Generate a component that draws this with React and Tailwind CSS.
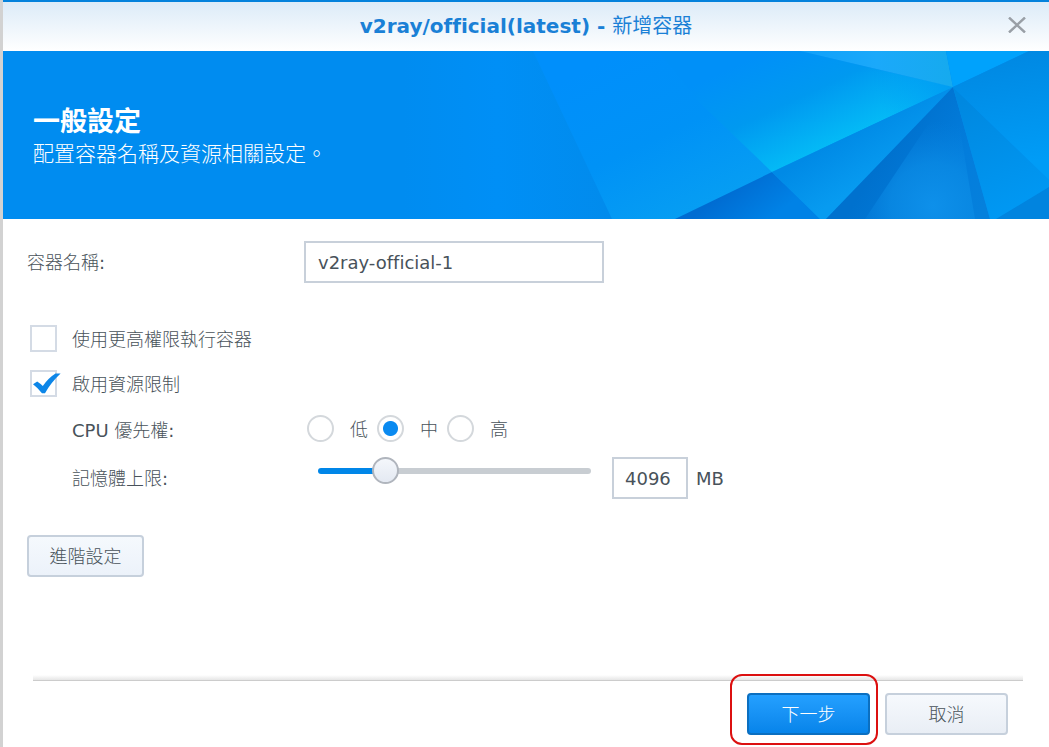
import { useState } from "react";

const MEMORY_MIN = 64;
const MEMORY_MAX = 18432;
const THUMB = 27;

function Han({ children }) {
  return <span className="font-['Noto_Sans_CJK_TC',sans-serif] font-light">{children}</span>;
}

function BannerArt() {
  return (
    <svg
      className="absolute inset-y-0 right-0 h-full"
      viewBox="400 0 646 168"
      preserveAspectRatio="xMaxYMid slice"
      aria-hidden="true"
    >
      <defs>
        <linearGradient id="leftBand" gradientUnits="userSpaceOnUse" x1="400" y1="0" x2="609" y2="0">
          <stop offset="0" stopColor="#008cf0" />
          <stop offset="0.45" stopColor="#008ff6" />
          <stop offset="1" stopColor="#018bec" />
        </linearGradient>
        <linearGradient id="wide" gradientUnits="userSpaceOnUse" x1="620" y1="0" x2="700" y2="168">
          <stop offset="0" stopColor="#008ffb" />
          <stop offset="0.5" stopColor="#0092f6" />
          <stop offset="1" stopColor="#079ff2" />
        </linearGradient>
        <linearGradient id="cyan" gradientUnits="userSpaceOnUse" x1="812" y1="-23" x2="860" y2="79">
          <stop offset="0" stopColor="#0090f8" />
          <stop offset="0.5" stopColor="#0099f0" />
          <stop offset="1" stopColor="#04baf6" />
        </linearGradient>
        <linearGradient id="cyanTip" gradientUnits="userSpaceOnUse" x1="880" y1="60" x2="950" y2="36">
          <stop offset="0" stopColor="#0098f4" stopOpacity="0" />
          <stop offset="1" stopColor="#0099f2" stopOpacity="0.9" />
        </linearGradient>
        <linearGradient id="topShard" x1="0" x2="1" y1="0" y2="0">
          <stop offset="0" stopColor="#10a0fa" />
          <stop offset="0.5" stopColor="#1ba9fa" />
          <stop offset="1" stopColor="#16aaee" />
        </linearGradient>
        <linearGradient id="middle" gradientUnits="userSpaceOnUse" x1="830" y1="90" x2="858" y2="135">
          <stop offset="0" stopColor="#008ae6" />
          <stop offset="1" stopColor="#079bf0" />
        </linearGradient>
        <linearGradient id="low" gradientUnits="userSpaceOnUse" x1="715" y1="146" x2="745" y2="185">
          <stop offset="0" stopColor="#006cd2" />
          <stop offset="1" stopColor="#0082e6" />
        </linearGradient>
        <linearGradient id="deep" gradientUnits="userSpaceOnUse" x1="890" y1="90" x2="985" y2="150">
          <stop offset="0" stopColor="#0071ce" />
          <stop offset="0.6" stopColor="#037ddc" />
          <stop offset="1" stopColor="#0580dc" />
        </linearGradient>
        <radialGradient id="deepGlow" gradientUnits="userSpaceOnUse" cx="930" cy="155" r="85">
          <stop offset="0" stopColor="#0e90ea" />
          <stop offset="0.5" stopColor="#0a8ae4" stopOpacity="0.8" />
          <stop offset="1" stopColor="#0780de" stopOpacity="0" />
        </radialGradient>
        <linearGradient id="right" gradientUnits="userSpaceOnUse" x1="1010" y1="0" x2="1030" y2="110">
          <stop offset="0" stopColor="#0088e2" />
          <stop offset="1" stopColor="#009cf6" />
        </linearGradient>
        <linearGradient id="rightLow" gradientUnits="userSpaceOnUse" x1="960" y1="50" x2="1010" y2="168">
          <stop offset="0" stopColor="#0088e0" />
          <stop offset="1" stopColor="#0099f4" />
        </linearGradient>
      </defs>
      <polygon points="400,0 531,0 610,168 400,168" fill="url(#leftBand)" />
      <polygon points="530,0 800,0 820,120 672,168 609,168" fill="url(#wide)" />
      <polygon points="655,0 797,0 950,36 769,121 697,52" fill="url(#cyan)" />
      <polygon points="797,0 950,36 840,88" fill="url(#cyanTip)" />
      <polygon points="797,0 943,0 950,36" fill="url(#topShard)" />
      <polygon points="943,0 1026,0 950,36" fill="#00a2fc" />
      <polygon points="769,121 817,168 672,168" fill="url(#low)" />
      <polygon points="950,36 769,121 817,168 823,168" fill="url(#middle)" />
      <polygon points="950,36 823,168 987,168" fill="url(#deep)" />
      <polygon points="950,36 862,168 972,168" fill="url(#deepGlow)" />
      <polygon points="950,36 987,168 1046,168 1046,129" fill="url(#rightLow)" />
      <polygon points="950,36 1026,0 1046,0 1046,129" fill="url(#right)" />
      <polygon points="1046,136 1046,168 993,168" fill="#0184df" />
    </svg>
  );
}

function CheckRow({ id, label, checked, onChange }) {
  return (
    <div className="flex h-[45px] items-center gap-[15px] pl-[3px]">
      <span className="relative flex">
        <input
          id={id}
          type="checkbox"
          checked={checked}
          onChange={(e) => onChange(e.target.checked)}
          className="size-[27px] appearance-none border-2 border-[#d4dbe5] bg-white"
        />
        {checked && (
          <svg
            viewBox="0 0 32 27"
            className="pointer-events-none absolute top-0 left-0 h-[27px] w-8"
            aria-hidden="true"
          >
            <path
              d="M3 14.2 L7.2 11.6 Q10.2 13.6 12.8 16 Q18.5 8 25.5 3.6 H30.6 Q21.5 12 15 23.2 H12 Q8 18 3 14.2 Z"
              fill="#0d86e8"
            />
          </svg>
        )}
      </span>
      <label htmlFor={id} className="leading-6">
        <Han>{label}</Han>
      </label>
    </div>
  );
}

export default function App() {
  const [name, setName] = useState("v2ray-official-1");
  const [privileged, setPrivileged] = useState(false);
  const [limited, setLimited] = useState(true);
  const [priority, setPriority] = useState("mid");
  const [memory, setMemory] = useState(4096);

  const ratio = (Number(memory) - MEMORY_MIN) / (MEMORY_MAX - MEMORY_MIN);
  const fill = `calc(${THUMB / 2}px + (100% - ${THUMB}px) * ${ratio})`;

  return (
    <div
      lang="zh-Hant"
      className="flex min-h-screen bg-[#d2d2d2] pl-[3px] font-['DejaVu_Sans','Noto_Sans_CJK_TC',sans-serif] text-lg text-[#48525a] [font-variant-ligatures:none]"
    >
      <div className="flex min-w-0 flex-1 flex-col border-t-2 border-[#0482dc] bg-white">
        <header className="relative flex h-[49px] items-center justify-center bg-linear-to-b from-[#dcebf8] to-white pb-[2px]">
          <h1 className="text-xl font-bold text-[#1a80d6]">
            v2ray/official(latest) -{" "}
            <span className="font-['Noto_Sans_CJK_TC',sans-serif] font-normal">新增容器</span>
          </h1>
          <button type="button" aria-label="關閉" className="absolute top-[11px] right-5 flex size-6 items-center justify-center">
            <svg viewBox="0 0 18 16" className="h-4 w-[18px]" aria-hidden="true">
              <path d="M1 0.5 L17 15.5 M17 0.5 L1 15.5" stroke="#999fa6" strokeWidth="2.4" />
            </svg>
          </button>
        </header>

        <section className="relative flex h-[168px] flex-col justify-center overflow-hidden bg-[#008cf0] pt-[3px] pl-[30px] text-white">
          <BannerArt />
          <h2 className="relative font-['Noto_Sans_CJK_TC',sans-serif] text-[27px] leading-8 font-bold">一般設定</h2>
          <p className="relative text-[21px] leading-8">
            <Han>配置容器名稱及資源相關設定。</Han>
          </p>
        </section>

        <form className="flex flex-1 flex-col" onSubmit={(e) => e.preventDefault()}>
          <div className="px-6 pt-[22px]">
            <div className="grid grid-cols-[277px_1fr] items-center">
              <label htmlFor="name">
                <Han>容器名稱</Han>:
              </label>
              <input
                id="name"
                type="text"
                value={name}
                onChange={(e) => setName(e.target.value)}
                className="h-[42px] w-[300px] border-2 border-[#c8d0da] bg-white px-3"
              />
            </div>

            <div className="mt-[33px]">
              <CheckRow id="privileged" label="使用更高權限執行容器" checked={privileged} onChange={setPrivileged} />
              <CheckRow id="limited" label="啟用資源限制" checked={limited} onChange={setLimited} />
            </div>

            <div className="grid grid-cols-[232px_1fr] pl-[45px]">
              <span id="priority" className="flex h-12 items-center">
                <span>
                  CPU <Han>優先權</Han>:
                </span>
              </span>
              <div role="radiogroup" aria-labelledby="priority" className="flex h-11 items-center gap-[9px] pl-[3px]">
                {[
                  ["low", "低"],
                  ["mid", "中"],
                  ["high", "高"],
                ].map(([value, label]) => (
                  <label key={value} className="flex items-center gap-4 leading-6">
                    <input
                      type="radio"
                      name="priority"
                      value={value}
                      checked={priority === value}
                      onChange={() => setPriority(value)}
                      className="size-[27px] appearance-none rounded-full border-2 border-[#d4d8dc] bg-white checked:bg-[radial-gradient(circle,#0a8af0_7px,#ffffff_8px)]"
                    />
                    <Han>{label}</Han>
                  </label>
                ))}
              </div>

              <label htmlFor="memory" className="flex h-[45px] items-center pt-[3px]">
                <span>
                  <Han>記憶體上限</Han>:
                </span>
              </label>
              <div className="flex items-start pt-[3px] pl-[14px]">
                <input
                  type="range"
                  aria-label="記憶體上限"
                  min={MEMORY_MIN}
                  max={MEMORY_MAX}
                  step={64}
                  value={memory}
                  onChange={(e) => setMemory(e.target.value)}
                  className="h-7 w-[273px] appearance-none bg-transparent [&::-webkit-slider-runnable-track]:h-[6px] [&::-webkit-slider-runnable-track]:rounded-full [&::-webkit-slider-runnable-track]:bg-[linear-gradient(to_right,#0086e8_var(--fill),#c8cdd2_var(--fill))] [&::-webkit-slider-thumb]:-mt-[11px] [&::-webkit-slider-thumb]:size-[27px] [&::-webkit-slider-thumb]:appearance-none [&::-webkit-slider-thumb]:rounded-full [&::-webkit-slider-thumb]:border-2 [&::-webkit-slider-thumb]:border-[#b0b5bd] [&::-webkit-slider-thumb]:bg-linear-to-b [&::-webkit-slider-thumb]:from-[#f4f7fb] [&::-webkit-slider-thumb]:to-[#e4e9f2]"
                  style={{ "--fill": fill }}
                />
                <input
                  id="memory"
                  type="text"
                  value={memory}
                  onChange={(e) => setMemory(e.target.value)}
                  className="ml-[21px] h-[42px] w-[76px] border-2 border-[#c8d0da] bg-white px-[11px]"
                />
                <span className="ml-2 leading-[44px]">MB</span>
              </div>
            </div>

            <button
              type="button"
              className="mt-[34px] h-[42px] w-[117px] rounded-[4px] border-2 border-[#c6d0dc] bg-linear-to-b from-[#f5f9fd] to-[#ecf2fa]"
            >
              <Han>進階設定</Han>
            </button>
          </div>

          <footer className="mt-auto mr-[26px] ml-[30px]">
            <div className="h-[6px] border-b border-[#cccccc] bg-linear-to-b from-white to-[#e6e6e6]" />
            <div className="flex justify-end gap-[15px] py-3 pr-[15px]">
              <div className="relative">
                <button
                  type="submit"
                  className="h-[42px] w-[123px] rounded-[4px] border-2 border-[#0b6fc0] bg-linear-to-b from-[#24a0ff] to-[#0684ea] text-white"
                >
                  <Han>下一步</Han>
                </button>
                <span className="pointer-events-none absolute -top-[19px] -right-2 -bottom-[10px] -left-[17px] rounded-xl border-2 border-[#dc1010]" />
              </div>
              <button
                type="button"
                className="h-[42px] w-[123px] rounded-[4px] border-2 border-[#c6d0dc] bg-linear-to-b from-[#f6f9fd] to-[#e9eef5]"
              >
                <Han>取消</Han>
              </button>
            </div>
          </footer>
        </form>
      </div>
    </div>
  );
}
